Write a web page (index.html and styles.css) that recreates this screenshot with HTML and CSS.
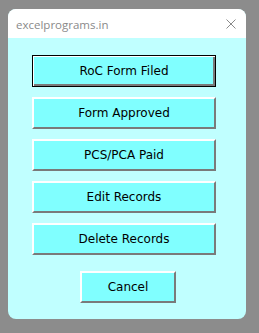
FILE: index.html
```html
<!DOCTYPE html>
<html lang="en">
<head>
  <meta charset="UTF-8" />
  <meta name="viewport" content="width=device-width,initial-scale=1.0" />
  <title>excelprograms.in</title>
  <link rel="stylesheet" href="styles.css">
</head>
<body>
  <div class="dialog">
    <div class="title-bar">
      <span class="title">excelprograms.in</span>
      <svg class="close" width="10" height="10" viewBox="0 0 10 10">
        <path d="M0.5 0.5 L9.5 9.5 M9.5 0.5 L0.5 9.5" stroke="#8a8a8a" stroke-width="1" fill="none" />
      </svg>
    </div>
    <div class="content">
      <button class="btn wide focused">RoC Form Filed</button>
      <button class="btn wide">Form Approved</button>
      <button class="btn wide">PCS/PCA Paid</button>
      <button class="btn wide">Edit Records</button>
      <button class="btn wide">Delete Records</button>
      <button class="btn cancel">Cancel</button>
    </div>
  </div>
</body>
</html>
```

FILE: styles.css
```css
body {
  margin: 0;
  background: #8c8c8c;
  font-family: "DejaVu Sans", sans-serif;
}

.dialog {
  margin: 9px 0 0 8px;
  width: 238px;
  height: 310px;
  border-radius: 8px;
  overflow: hidden;
  background: #c0ffff;
}

.title-bar {
  height: 29px;
  background: #fff;
  display: flex;
  align-items: center;
  justify-content: space-between;
  padding: 0 10px 0 8px;
}

.title {
  font-family: "Open Sans", sans-serif;
  font-size: 11.5px;
  color: #8a8a8a;
  margin-top: 1px;
}

.close {
  margin-top: 1px;
}

.content {
  display: flex;
  flex-direction: column;
  padding: 17px 0 0 24px;
}

.btn {
  box-sizing: border-box;
  height: 32px;
  background: #80ffff;
  border-top: 2px solid #fff;
  border-left: 2px solid #fff;
  border-right: 2px solid #7a7a7a;
  border-bottom: 2px solid #7a7a7a;
  font-family: "DejaVu Sans", sans-serif;
  font-size: 12px;
  color: #000;
  padding: 0;
}

.wide {
  width: 184px;
  margin-bottom: 10px;
}

.focused {
  border: 1px solid #000;
  box-shadow: inset 1px 1px #fff, inset -2px -2px #7a7a7a;
}

.cancel {
  width: 96px;
  margin: 6px 0 0 48px;
}
```
